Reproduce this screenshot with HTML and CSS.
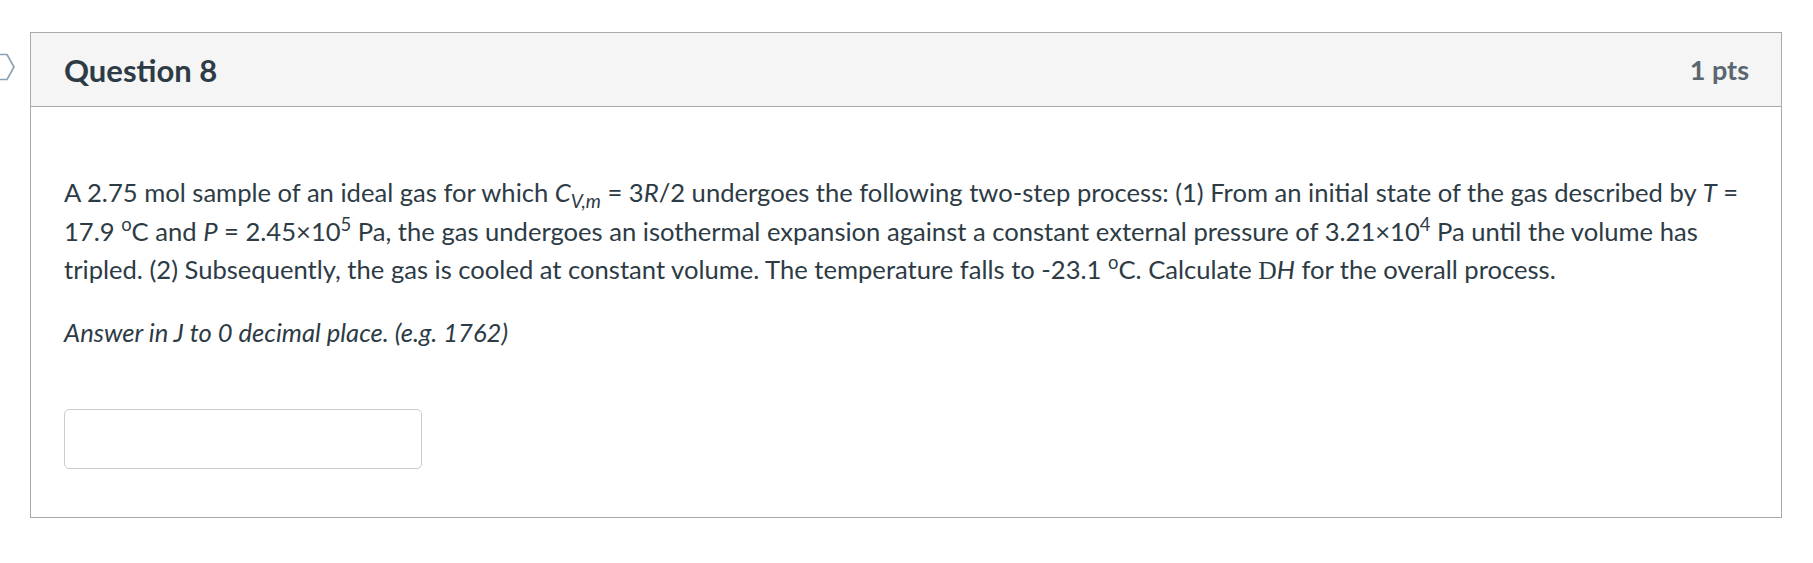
FILE: index.html
```html
<!DOCTYPE html>
<html lang="en">
<head>
<meta charset="utf-8">
<title>Question 8</title>
<link rel="stylesheet" href="styles.css">
</head>
<body>
<div class="page">
  <div class="marker">
    <svg class="flag" width="30" height="30" viewBox="0 0 30 30" aria-hidden="true">
      <polygon points="-10,1.5 7,1.5 14,14 7,26.5 -10,26.5" fill="none" stroke="#8aa2b8" stroke-width="1.6" stroke-linejoin="round"/>
    </svg>
  </div>
  <div class="question">
    <div class="q-header">
      <span class="q-title">Question 8</span>
      <span class="q-points">1 pts</span>
    </div>
    <div class="q-body">
      <p class="q-text">A 2.75 mol sample of an ideal gas for which <i>C</i><sub class="sub"><i>V,m</i></sub> = 3<i>R</i>/2 undergoes the following two-step process: (1) From an initial state of the gas described by <i>T</i> = 17.9 <sup class="sup">o</sup>C and <i>P</i> = 2.45×10<sup class="sup">5</sup> Pa, the gas undergoes an isothermal expansion against a constant external pressure of 3.21×10<sup class="sup">4</sup> Pa until the volume has tripled. (2) Subsequently, the gas is cooled at constant volume. The temperature falls to -23.1 <sup class="sup">o</sup>C. Calculate <span class="symbol">D</span><i>H</i> for the overall process.</p>
      <p class="q-note"><i>Answer in J to 0 decimal place. (e.g. 1762)</i></p>
      <div class="answer-row">
        <input class="answer" type="text" aria-label="Answer">
      </div>
    </div>
  </div>
</div>
</body>
</html>
```

FILE: styles.css
```css
html, body {
  margin: 0;
  padding: 0;
  background: #ffffff;
}

body {
  font-family: Lato, "Open Sans", "Liberation Sans", sans-serif;
  color: #2d3b45;
}

.page {
  display: flex;
  align-items: flex-start;
  padding-top: 32px;
}

.marker {
  width: 30px;
  flex: 0 0 30px;
  padding-top: 21px;
}

.flag {
  display: block;
  overflow: hidden;
}

.question {
  width: 1752px;
  box-sizing: border-box;
  border: 1px solid #aaaaaa;
}

.q-header {
  display: flex;
  justify-content: space-between;
  align-items: center;
  height: 73px;
  padding: 0 32px 0 33px;
  background: #f5f5f5;
  border-bottom: 1px solid #aaaaaa;
}

.q-title {
  font-weight: 700;
  font-size: 31px;
  color: #2d3b45;
}

.q-points {
  font-weight: 700;
  font-size: 27px;
  color: #5b6770;
}

.q-body {
  padding: 66px 34px 48px 33px;
}

.q-text,
.q-note {
  margin: 0;
  font-size: 25.6px;
  line-height: 38.5px;
}

.q-note {
  margin-top: 22px;
}

.sub {
  font-size: 0.75em;
  line-height: 0;
  vertical-align: -0.3em;
}

.sup {
  font-size: 0.72em;
  line-height: 0;
  vertical-align: 0.55em;
}

.symbol {
  font-family: "Liberation Serif", "DejaVu Serif", serif;
}

.answer-row {
  padding-top: 58px;
}

.answer {
  display: block;
  width: 358px;
  height: 60px;
  box-sizing: border-box;
  margin: 0;
  border: 1px solid #c7cdd1;
  border-radius: 5px;
  background: #ffffff;
  font-family: Lato, sans-serif;
  font-size: 25px;
}
```
